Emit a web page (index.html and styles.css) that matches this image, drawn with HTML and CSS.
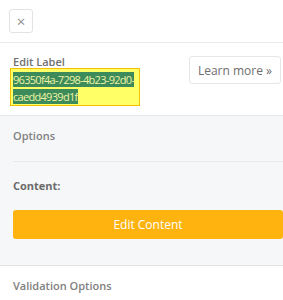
FILE: index.html
```html
<!DOCTYPE html>
<html lang="en">
<head>
    <meta charset="UTF-8">
    <title>Edit Label</title>
    <link rel="stylesheet" href="styles.css">
</head>
<body>
    <div class="dialog-header">
        <button class="close-btn" type="button">&times;</button>
    </div>

    <div class="label-panel">
        <div class="label-field">
            <div class="field-title">Edit Label</div>
            <div class="label-input"><span class="selected">96350f4a-7298-4b23-92d0-<br>caedd4939d1f</span></div>
        </div>
        <button class="learn-btn" type="button">Learn more &raquo;</button>
    </div>

    <div class="options-panel">
        <h3 class="section-title">Options</h3>
        <div class="option-row">
            <div class="option-label">Content:</div>
            <button class="edit-btn" type="button">Edit Content</button>
        </div>
    </div>

    <div class="validation-panel">
        <h3 class="section-title">Validation Options</h3>
    </div>
</body>
</html>
```

FILE: styles.css
```css
body {
    margin: 0;
    font-family: "Open Sans", "Liberation Sans", sans-serif;
    color: #515151;
    background-color: #fff;
    overflow: hidden;
}

.dialog-header {
    height: 43px;
    padding: 9px 0 0 9px;
    box-sizing: border-box;
    border-bottom: 1px solid #e9e9eb;
}

.close-btn {
    width: 24px;
    height: 24px;
    padding: 0;
    border: 1px solid #e3e3e3;
    border-radius: 3px;
    background-color: #fff;
    color: #8f8f8f;
    font-family: "Open Sans", sans-serif;
    font-size: 15px;
    line-height: 20px;
}

.label-panel {
    display: flex;
    justify-content: space-between;
    align-items: flex-start;
    height: 73px;
    padding: 12px 2px 0 10px;
    box-sizing: border-box;
    border-bottom: 1px solid #e9e9eb;
}

.field-title {
    margin-left: 3px;
    font-size: 11px;
    font-weight: 600;
    line-height: 13px;
    color: #707070;
}

.label-input {
    width: 124px;
    height: 34px;
    padding: 2px 2px 0;
    background-color: #ffff66;
    border: 1px solid #f5c000;
    font-size: 11px;
    line-height: 17px;
    letter-spacing: -0.7px;
    white-space: nowrap;
}

.selected {
    background-color: #3d8b5b;
    color: #eef3a2;
}

.learn-btn {
    flex-shrink: 0;
    width: 92px;
    height: 28px;
    margin-top: 1px;
    padding: 0;
    border: 1px solid #e6e6e6;
    border-radius: 3px;
    background-color: #fff;
    color: #6e6e6e;
    font-family: inherit;
    font-size: 12px;
    white-space: nowrap;
}

.options-panel {
    background-color: #f6f7f9;
    padding: 0 0 26px 13px;
    border-bottom: 1px solid #e3e3e5;
}

.section-title {
    margin: 0;
    font-size: 11px;
    font-weight: 600;
    line-height: 16px;
    color: #808080;
}

.options-panel .section-title {
    padding: 12px 0 17px;
    border-bottom: 1px solid #e8e9ec;
}

.option-row {
    padding-top: 16px;
}

.option-label {
    font-size: 11px;
    font-weight: 700;
    line-height: 16px;
    color: #6a6a6a;
    margin-bottom: 16px;
}

.edit-btn {
    display: block;
    width: 270px;
    height: 29px;
    padding: 0;
    border: none;
    border-radius: 3px;
    background-color: #ffb30f;
    color: #fff;
    font-family: inherit;
    font-size: 12px;
}

.validation-panel {
    padding: 12px 0 0 13px;
}
```
